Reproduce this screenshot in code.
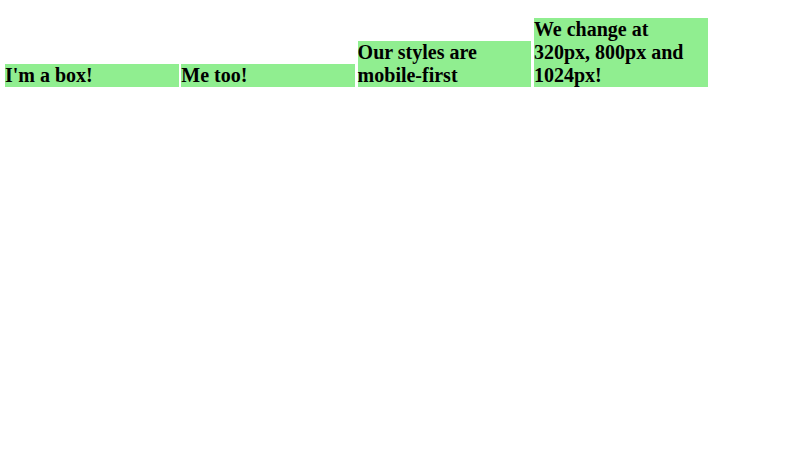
import { Fragment } from "react";

const boxes = [
    "I'm a box!",
    "Me too!",
    "Our styles are mobile-first",
    "We change at 320px, 800px and 1024px!",
];

const App = () => {
    return (
        <main className="px-[5px] pt-[18px] font-['Liberation_Serif',serif] text-[10px] leading-normal text-black">
            {/* the space between inline blocks is the gutter */}
            {boxes.map((text) => (
                <Fragment key={text}>
                    <h2 className="inline-block w-[22%] bg-[#90ee90] text-[20px] leading-[normal] font-bold">
                        {text}
                    </h2>{" "}
                </Fragment>
            ))}
        </main>
    );
};

export default App;
